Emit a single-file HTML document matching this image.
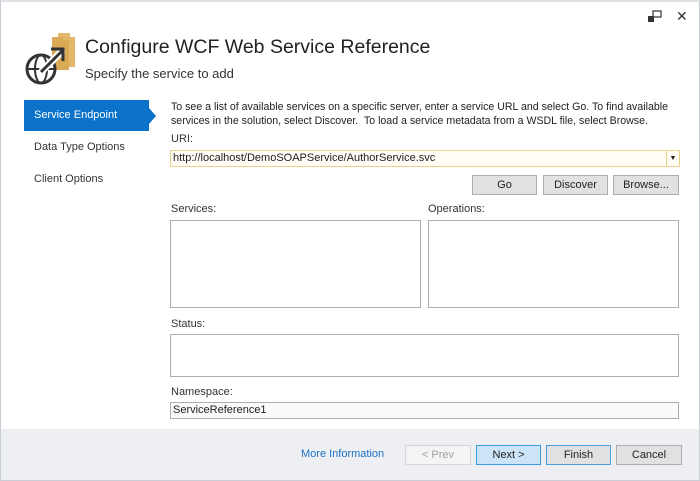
<!DOCTYPE html>
<html><head><style>
*{box-sizing:border-box;margin:0;padding:0}
body{width:700px;height:481px;background:#fff;font-family:"Liberation Sans",sans-serif;color:#1e1e1e;position:relative;overflow:hidden}
.frame{position:absolute;left:0;top:0;width:700px;height:481px;border:1px solid #c9ccd3;border-top:2px solid #dfe1e6}
.a{position:absolute;white-space:nowrap}
.lbl{font-size:11px;color:#333}
.box{position:absolute;border:1px solid #abadb3;background:#fff}
.btn{position:absolute;border:1px solid #adadad;background:#e1e1e1;font-size:11px;text-align:center;line-height:18px;color:#222}
</style></head><body>
<div class="frame"></div>
<svg class="a" style="left:647px;top:10px" width="16" height="14" viewBox="0 0 16 14"><rect x="6" y="1" width="8" height="6" fill="none" stroke="#333" stroke-width="1.2"/><rect x="1" y="6" width="6" height="6" fill="#333"/></svg>
<div class="a" style="left:676px;top:8px;font-size:14px;color:#333">✕</div>
<svg class="a" style="left:22px;top:30px" width="56" height="58" viewBox="0 0 56 58">
<path d="M36 3h12v4h5v30H36z" fill="#e2b86a"/><path d="M30 7h11v3h6v30H30z" fill="#d9a956"/>
<circle cx="19" cy="39" r="14" fill="#fff" stroke="#333" stroke-width="3"/>
<ellipse cx="19" cy="39" rx="6" ry="14" fill="none" stroke="#333" stroke-width="2"/>
<line x1="5" y1="39" x2="33" y2="39" stroke="#333" stroke-width="2"/>
<path d="M19 42L41 20" stroke="#fff" stroke-width="7"/>
<path d="M19 42L40 21M29 19h12v12" fill="none" stroke="#333" stroke-width="3"/>
</svg>
<div class="a" style="left:85px;top:36px;font-size:19.5px;color:#222">Configure WCF Web Service Reference</div>
<div class="a" style="left:85px;top:66px;font-size:13px;color:#333">Specify the service to add</div>
<div class="a" style="left:24px;top:100px;width:125px;height:31px;background:#0a72c9"></div>
<div class="a" style="left:149px;top:108px;width:0;height:0;border-top:8px solid transparent;border-bottom:8px solid transparent;border-left:7px solid #0a72c9"></div>
<div class="a" style="left:34px;top:109px;font-size:11px;color:#fff">Service Endpoint</div>
<div class="a" style="left:34px;top:141px;font-size:11px;color:#333">Data Type Options</div>
<div class="a" style="left:34px;top:173px;font-size:11px;color:#333">Client Options</div>
<div class="a" style="left:171px;top:100px;font-size:10.6px;line-height:14px;color:#222">To see a list of available services on a specific server, enter a service URL and select Go. To find available<br>services in the solution, select Discover.&nbsp; To load a service metadata from a WSDL file, select Browse.</div>
<div class="a lbl" style="left:171px;top:133px">URI:</div>
<div class="box" style="left:170px;top:150px;width:510px;height:17px;border-color:#e8d28a;background:#fffdf5"></div>
<div class="a" style="left:666px;top:151px;width:13px;height:15px;border-left:1px solid #e8d28a;font-size:7px;text-align:center;line-height:15px">▼</div>
<div class="a" style="left:173px;top:152px;font-size:11px">http://localhost/DemoSOAPService/AuthorService.svc</div>
<div class="btn" style="left:472px;top:175px;width:65px;height:20px">Go</div>
<div class="btn" style="left:543px;top:175px;width:65px;height:20px">Discover</div>
<div class="btn" style="left:613px;top:175px;width:66px;height:20px">Browse...</div>
<div class="a lbl" style="left:171px;top:203px">Services:</div>
<div class="a lbl" style="left:428px;top:203px">Operations:</div>
<div class="box" style="left:170px;top:220px;width:251px;height:88px"></div>
<div class="box" style="left:428px;top:220px;width:251px;height:88px"></div>
<div class="a lbl" style="left:171px;top:318px">Status:</div>
<div class="box" style="left:170px;top:334px;width:509px;height:43px"></div>
<div class="a lbl" style="left:171px;top:386px">Namespace:</div>
<div class="box" style="left:170px;top:402px;width:509px;height:17px;background:#fafafa"></div>
<div class="a" style="left:173px;top:404px;font-size:11px">ServiceReference1</div>
<div class="a" style="left:1px;top:429px;width:698px;height:51px;background:#eeeff2"></div>
<div class="a" style="left:301px;top:448px;font-size:11px;color:#1a73c6">More Information</div>
<div class="btn" style="left:405px;top:445px;width:66px;height:20px;background:#f4f4f4;border-color:#d6d6d6;color:#a0a0a0">&lt; Prev</div>
<div class="btn" style="left:476px;top:445px;width:65px;height:20px;background:#cce4f7;border-color:#3d9be0">Next &gt;</div>
<div class="btn" style="left:546px;top:445px;width:65px;height:20px;border-color:#4c9fdf">Finish</div>
<div class="btn" style="left:616px;top:445px;width:66px;height:20px">Cancel</div>
</body></html>
